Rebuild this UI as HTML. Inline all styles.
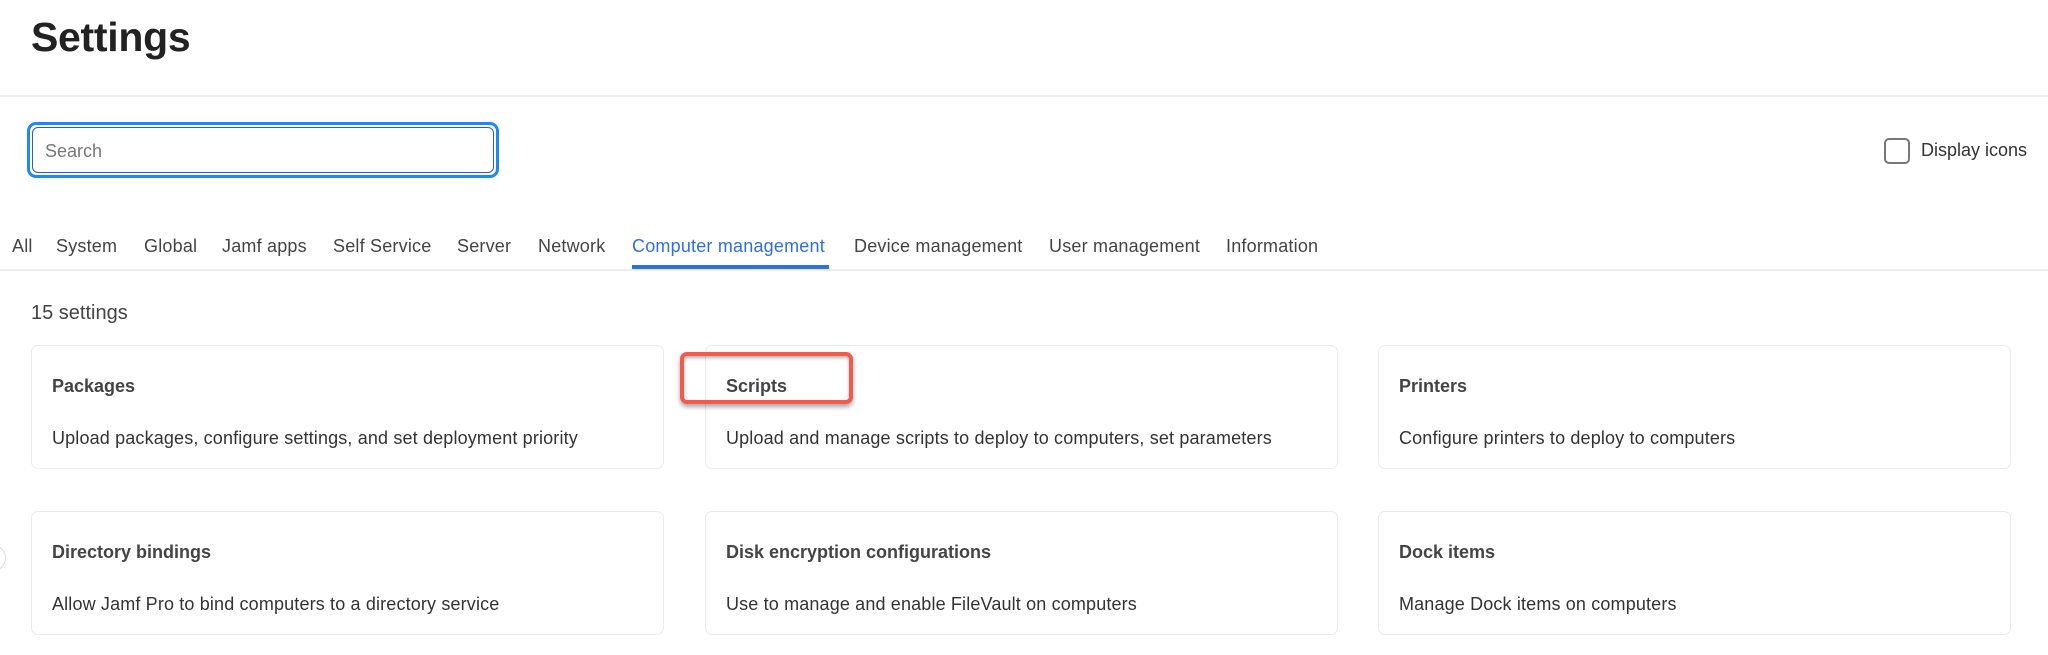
<!DOCTYPE html>
<html><head><meta charset="utf-8"><style>
*{margin:0;padding:0;box-sizing:border-box}
body{width:2048px;height:655px;overflow:hidden;background:#fff;font-family:"Liberation Sans",Arial,sans-serif;color:#333;position:relative}
.a{position:absolute;white-space:nowrap}
h1{position:absolute;left:31px;top:14px;font-size:41px;font-weight:bold;color:#222;letter-spacing:-0.3px}
.hr{position:absolute;left:0;width:2048px;height:2px;background:#eceded}
.search{position:absolute;left:27px;top:122px;width:472px;height:56px;border:3px solid #1e88f5;border-radius:9px;padding:2px}
.search div{width:100%;height:100%;border:1.5px solid #2a5bd7;border-radius:6px;font-size:18px;color:#777;padding:13px 0 0 12px}
.cb{position:absolute;left:1884px;top:138px;width:26px;height:26px;border:2px solid #777;border-radius:5px}
.tab{position:absolute;top:236px;font-size:18px;color:#444;letter-spacing:0.2px}
.card{position:absolute;width:633px;height:124px;border:1.5px solid #ececec;border-radius:7px;background:#fff}
.card b{position:absolute;left:20px;top:30px;font-size:18px;color:#444}
.card span{position:absolute;left:20px;top:82px;font-size:18px;color:#333;white-space:nowrap;letter-spacing:0.15px}
</style></head><body>
<h1>Settings</h1>
<div class="hr" style="top:95px"></div>
<div class="search"><div>Search</div></div>
<div class="cb"></div>
<div class="a" style="left:1921px;top:140px;font-size:18px;color:#333">Display icons</div>
<div class="tab" style="left:12px">All</div>
<div class="tab" style="left:56px">System</div>
<div class="tab" style="left:144px">Global</div>
<div class="tab" style="left:222px">Jamf apps</div>
<div class="tab" style="left:333px">Self Service</div>
<div class="tab" style="left:457px">Server</div>
<div class="tab" style="left:538px">Network</div>
<div class="tab" style="left:632px;color:#2f6fe4">Computer management</div>
<div class="tab" style="left:854px">Device management</div>
<div class="tab" style="left:1049px">User management</div>
<div class="tab" style="left:1226px">Information</div>
<div class="hr" style="top:269px"></div>
<div class="a" style="left:632px;top:265px;width:197px;height:4px;background:#2f6fe4"></div>
<div class="a" style="left:31px;top:302px;font-size:20px;color:#444">15 settings</div>
<div class="card" style="left:31px;top:345px"><b>Packages</b><span>Upload packages, configure settings, and set deployment priority</span></div>
<div class="card" style="left:705px;top:345px"><b>Scripts</b><span>Upload and manage scripts to deploy to computers, set parameters</span></div>
<div class="card" style="left:1378px;top:345px"><b>Printers</b><span>Configure printers to deploy to computers</span></div>
<div class="card" style="left:31px;top:511px"><b>Directory bindings</b><span>Allow Jamf Pro to bind computers to a directory service</span></div>
<div class="card" style="left:705px;top:511px"><b>Disk encryption configurations</b><span>Use to manage and enable FileVault on computers</span></div>
<div class="card" style="left:1378px;top:511px"><b>Dock items</b><span>Manage Dock items on computers</span></div>
<div class="a" style="left:680px;top:352px;width:173px;height:52px;border:4px solid #f25a4e;border-radius:7px;box-shadow:0 3px 5px rgba(0,0,0,0.35), inset 0 2px 3px rgba(0,0,0,0.3)"></div>
<div class="a" style="left:-20px;top:545px;width:26px;height:26px;border:1.5px solid #ddd;border-radius:50%"></div>
</body></html>
